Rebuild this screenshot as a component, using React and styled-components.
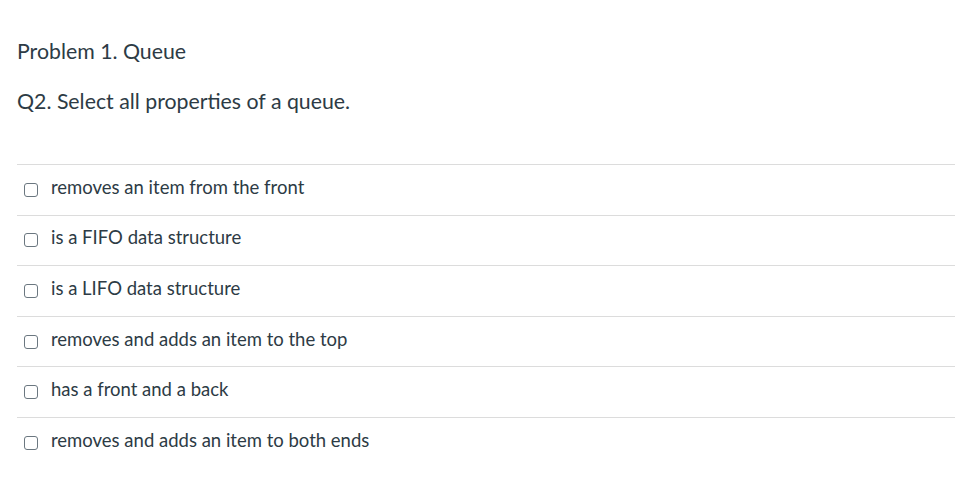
import React from "react";
import styled, { createGlobalStyle } from "styled-components";

const Global = createGlobalStyle`
  html, body { margin: 0; padding: 0; background: #fff; }
  body { font-family: Lato, "Noto Sans", sans-serif; color: #2d3b45; }
`;

const Page = styled.div`
  padding: 36px 7px 0 17px;
`;

const Title = styled.h1`
  margin: 0;
  font-size: 21.3px;
  font-weight: 400;
  line-height: 30px;
`;

const Question = styled.h2`
  margin: 20px 0 0;
  font-size: 21.3px;
  font-weight: 400;
  line-height: 30px;
`;

const List = styled.ul`
  list-style: none;
  margin: 48px 0 0;
  padding: 0;
`;

const Row = styled.li`
  display: flex;
  align-items: center;
  gap: 13px;
  height: 50.6px;
  box-sizing: border-box;
  border-top: 1px solid #dcdcdc;
  padding: 0 0 6px 7px;
  font-size: 18.5px;
`;

const Box = styled.span`
  width: 14px;
  height: 14px;
  box-sizing: border-box;
  border: 1.5px solid #6b7780;
  border-radius: 3px;
  flex: none;
  margin-top: 6px;
`;

const items = [
  "removes an item from the front",
  "is a FIFO data structure",
  "is a LIFO data structure",
  "removes and adds an item to the top",
  "has a front and a back",
  "removes and adds an item to both ends",
];

export default function App() {
  return (
    <>
      <Global />
      <Page>
        <Title>Problem 1. Queue</Title>
        <Question>Q2. Select all properties of a queue.</Question>
        <List>
          {items.map((t) => (
            <Row key={t}>
              <Box />
              <span>{t}</span>
            </Row>
          ))}
        </List>
      </Page>
    </>
  );
}
